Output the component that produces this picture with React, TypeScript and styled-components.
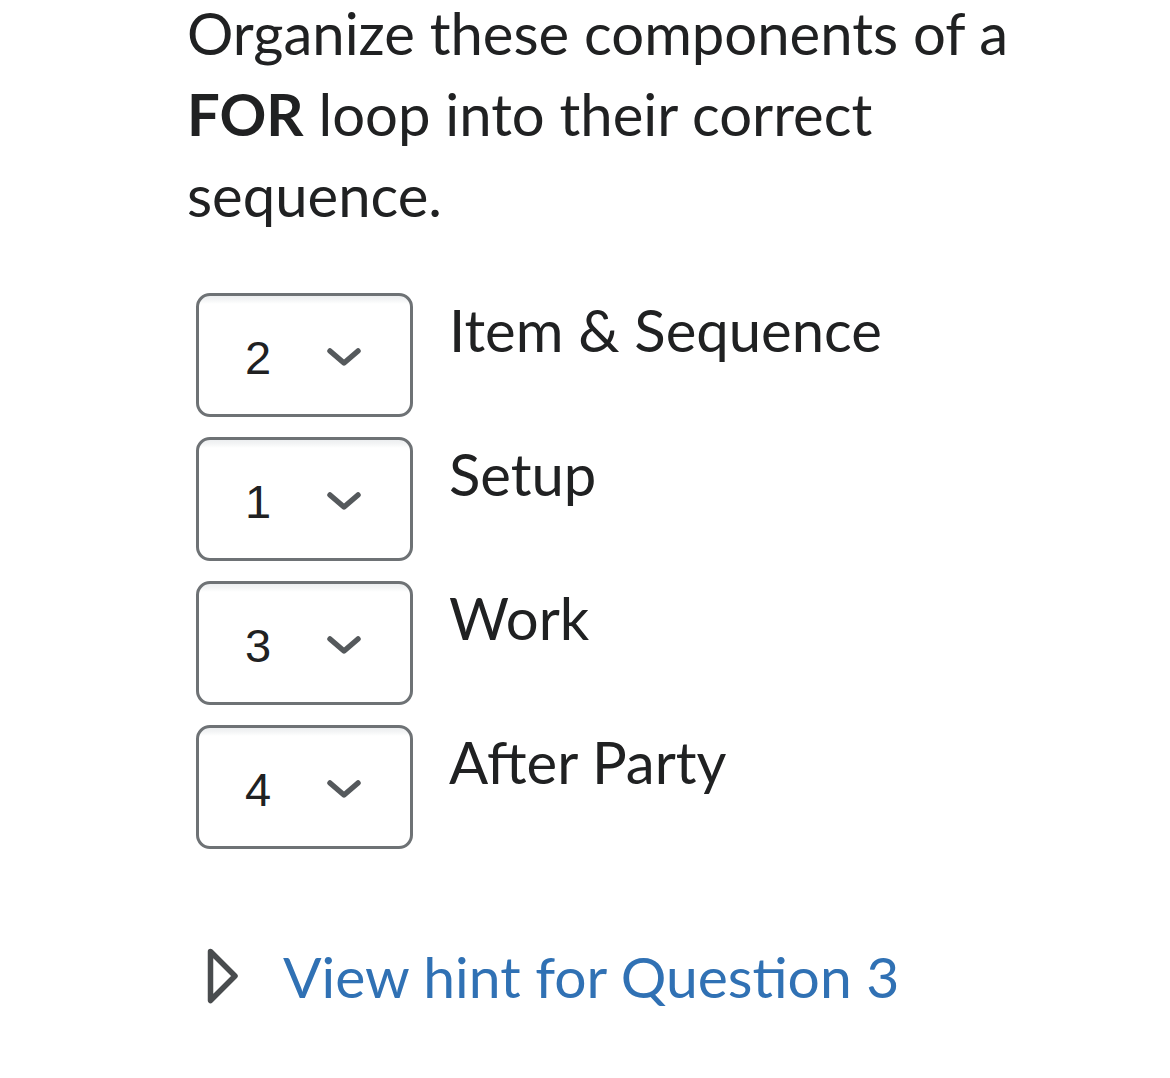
import React from 'react'
import styled, { createGlobalStyle } from 'styled-components'

const GlobalStyle = createGlobalStyle`
  html, body {
    margin: 0;
    padding: 0;
    background: #ffffff;
  }
  body {
    font-family: Lato, "Open Sans", sans-serif;
    color: #202122;
    overflow: hidden;
  }
`

const Page = styled.main`
  width: 1170px;
  height: 1078px;
  padding: 0 0 0 187px;
  box-sizing: border-box;
`

const Prompt = styled.p`
  margin: -8px 0 0;
  width: 900px;
  font-size: 58px;
  line-height: 81px;
  font-weight: 400;
  color: #202122;

  strong {
    font-weight: 700;
  }
`

const List = styled.div`
  display: flex;
  flex-direction: column;
  gap: 20px;
  margin: 58px 0 0 9px;
`

const Row = styled.div`
  display: flex;
  align-items: flex-start;
  gap: 36px;
`

const Select = styled.div`
  display: flex;
  align-items: center;
  gap: 56px;
  width: 217px;
  height: 124px;
  box-sizing: border-box;
  padding: 5px 0 0 46px;
  border: 3px solid #6e7275;
  border-radius: 14px;
  background: linear-gradient(#eceef0 0, #f4f5f6 4px, #ffffff 8px);
`

const Value = styled.span`
  font-family: "Liberation Sans", Arial, sans-serif;
  font-size: 47px;
  color: #202122;
  line-height: 1;
`

const Label = styled.span`
  font-size: 58px;
  line-height: 68px;
  margin-top: 3px;
  color: #202122;
`

const Hint = styled.div`
  display: flex;
  align-items: center;
  gap: 44px;
  margin: 93px 0 0 20px;
`

const HintLink = styled.a`
  font-size: 57px;
  line-height: 68px;
  color: #3071b4;
  text-decoration: none;
`

const Chevron = () => (
  <svg width="34" height="20" viewBox="0 0 34 20" fill="none">
    <path d="M3 3 L17 15 L31 3" stroke="#55595c" strokeWidth="5.5" strokeLinecap="round" strokeLinejoin="round" />
  </svg>
)

const Caret = () => (
  <svg width="32" height="56" viewBox="0 0 32 56" fill="none">
    <path d="M3.5 3.5 L28 28 L3.5 52.5 Z" stroke="#494c4e" strokeWidth="5.5" strokeLinejoin="round" />
  </svg>
)

const items = [
  { value: '2', label: 'Item & Sequence' },
  { value: '1', label: 'Setup' },
  { value: '3', label: 'Work' },
  { value: '4', label: 'After Party' },
]

export default function App() {
  return (
    <>
      <GlobalStyle />
      <Page>
        <Prompt>
          Organize these components of a <strong>FOR</strong> loop into their correct sequence.
        </Prompt>
        <List>
          {items.map(item => (
            <Row key={item.label}>
              <Select>
                <Value>{item.value}</Value>
                <Chevron />
              </Select>
              <Label>{item.label}</Label>
            </Row>
          ))}
        </List>
        <Hint>
          <Caret />
          <HintLink href="#">View hint for Question 3</HintLink>
        </Hint>
      </Page>
    </>
  )
}
